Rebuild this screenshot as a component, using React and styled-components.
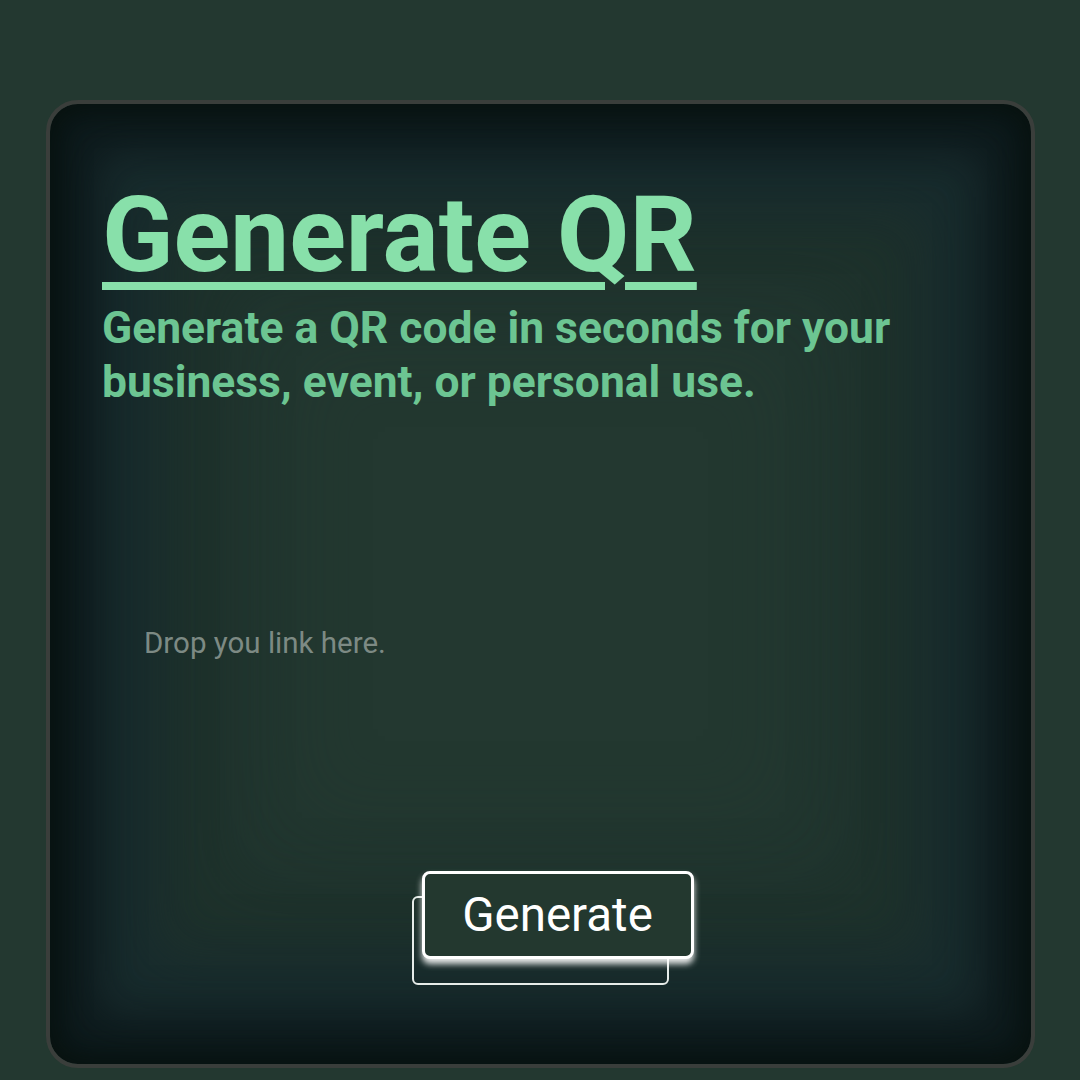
import React from "react";
import styled, { createGlobalStyle } from "styled-components";

const GlobalStyle = createGlobalStyle`
  html, body {
    margin: 0;
    padding: 0;
    background: #233830;
    font-family: Roboto, "Liberation Sans", sans-serif;
  }
`;

const Page = styled.div`
  width: 1080px;
  height: 1080px;
  box-sizing: border-box;
  padding: 100px 45px 12px 46px;
  display: flex;
`;

const Card = styled.div`
  flex: 1;
  box-sizing: border-box;
  border: 4px solid #3a3e3b;
  border-radius: 32px;
  background: #233830;
  box-shadow:
    inset 0 0 30px 8px #07110e,
    inset 0 0 40px 50px rgba(12, 24, 26, 0.85),
    inset 0 0 50px 110px rgba(20, 40, 46, 0.6),
    inset 0 0 60px 180px rgba(26, 44, 40, 0.45),
    inset 0 0 80px 240px rgba(30, 50, 46, 0.3);
  padding: 77px 52px 0 52px;
  display: flex;
  flex-direction: column;
`;

const Title = styled.h1`
  margin: 0;
  font-size: 105px;
  line-height: 110px;
  font-weight: 700;
  color: #88e0aa;
  text-decoration: underline;
  text-decoration-thickness: 8px;
  text-underline-offset: 11px;
`;

const Subtitle = styled.p`
  margin: 10px 0 0;
  font-size: 44.4px;
  line-height: 54px;
  font-weight: 700;
  color: #6cc592;
  max-width: 830px;
`;

const LinkInput = styled.input`
  margin: 214px 0 0 42px;
  width: 600px;
  height: 40px;
  padding: 0;
  background: transparent;
  border: none;
  outline: none;
  font-family: Roboto, "Liberation Sans", sans-serif;
  font-size: 29.5px;
  color: #d8e4de;

  &::placeholder {
    color: #7d8a84;
  }
`;

const ButtonRow = styled.div`
  margin-top: 208px;
  display: flex;
  justify-content: center;
  padding-left: 34px;
`;

const ButtonLayer = styled.div`
  position: relative;
  z-index: 0;
`;

const GenerateButton = styled.button`
  position: relative;
  width: 272px;
  height: 88px;
  box-sizing: border-box;
  border: 3px solid #ffffff;
  border-radius: 8px;
  background: #23382f;
  color: #ffffff;
  font-family: Roboto, "Liberation Sans", sans-serif;
  font-size: 47.5px;
  font-weight: 400;
  box-shadow: 0 5px 6px rgba(255, 255, 255, 0.9);

  &::before {
    content: "";
    position: absolute;
    left: -13px;
    top: 22px;
    width: 257px;
    height: 89px;
    box-sizing: border-box;
    border: 2px solid #e6ece9;
    border-radius: 6px;
    z-index: -1;
  }
`;

export default function App() {
  return (
    <>
      <GlobalStyle />
      <Page>
        <Card>
          <Title>Generate QR</Title>
          <Subtitle>
            Generate a QR code in seconds for your business, event, or personal
            use.
          </Subtitle>
          <LinkInput type="text" placeholder="Drop you link here." />
          <ButtonRow>
            <ButtonLayer>
              <GenerateButton>Generate</GenerateButton>
            </ButtonLayer>
          </ButtonRow>
        </Card>
      </Page>
    </>
  );
}
